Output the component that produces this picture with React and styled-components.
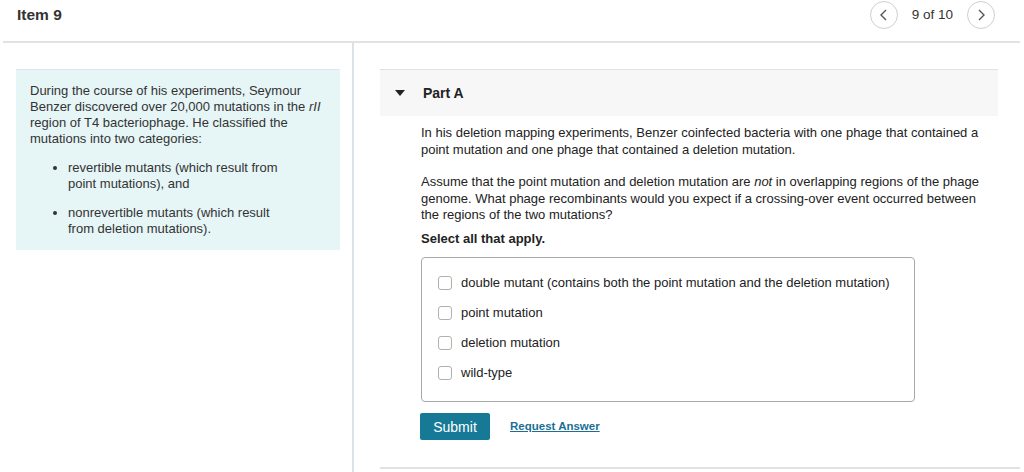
import React from 'react';
import styled, { createGlobalStyle } from 'styled-components';

const Global = createGlobalStyle`
  body {
    margin: 0;
    background: #fff;
    font-family: "Liberation Sans", Arial, Helvetica, sans-serif;
    color: #222;
  }
`;

const Page = styled.div`
  width: 1024px;
  height: 472px;
  overflow: hidden;
  display: flex;
  flex-direction: column;
`;

const TopBar = styled.header`
  height: 43px;
  margin: 0 4px 0 3px;
  padding: 0 25px 12px 14px;
  border-bottom: 2px solid #e2e2e2;
  display: flex;
  align-items: center;
  justify-content: space-between;
  box-sizing: border-box;
`;

const Title = styled.h1`
  margin: 0;
  font-size: 15.5px;
  font-weight: bold;
  color: #333;
`;

const Nav = styled.div`
  display: flex;
  align-items: center;
  gap: 14px;
  font-size: 13.5px;
  color: #333;
`;

const Circle = styled.button`
  width: 28px;
  height: 28px;
  border-radius: 50%;
  border: 1px solid #cfcfcf;
  background: #fff;
  padding: 0;
  display: flex;
  align-items: center;
  justify-content: center;
  color: #666;
`;

const Body = styled.div`
  flex: 1;
  display: grid;
  grid-template-columns: 352px 1fr;
`;

const LeftCol = styled.div`
  padding: 26px 12px 0 16px;
`;

const Intro = styled.div`
  background: #e6f5f6;
  border-top: 1px solid #dde6ea;
  height: 181px;
  box-sizing: border-box;
  padding: 13px 18px 0 14px;
  font-size: 13px;
  line-height: 16px;
  color: #333;
`;

const IntroText = styled.p`
  margin: 0;
`;

const List = styled.ul`
  margin: 13px 0 0 0;
  padding-left: 38px;
  padding-right: 40px;
  list-style: disc;
  li {
    margin-bottom: 13px;
  }
`;

const RightCol = styled.div`
  border-left: 2px solid #dbe2ea;
  padding: 26px 0 0 26px;
  display: flex;
  flex-direction: column;
`;

const PartHeader = styled.div`
  margin-right: 26px;
  height: 46px;
  background: #f7f7f7;
  border-top: 1px solid #e0e0e0;
  display: flex;
  align-items: center;
  padding-left: 15px;
  gap: 18px;
  font-size: 14px;
  font-weight: bold;
  color: #222;
`;

const Triangle = styled.span`
  width: 0;
  height: 0;
  border-left: 5px solid transparent;
  border-right: 5px solid transparent;
  border-top: 6px solid #222;
`;

const Content = styled.div`
  padding: 9px 40px 0 41px;
  font-size: 13px;
  line-height: 16.5px;
  color: #222;
  flex: 1;
`;

const Para = styled.p`
  margin: 0 0 16px 0;
`;

const Instruction = styled.p`
  margin: -9px 0 10px 0;
  font-weight: bold;
`;

const Options = styled.div`
  width: 494px;
  box-sizing: border-box;
  border: 1px solid #a8a8a8;
  border-radius: 4px;
  padding: 16px 0 19px 16px;
  display: flex;
  flex-direction: column;
  gap: 12px;
`;

const Option = styled.label`
  display: flex;
  align-items: center;
  gap: 9px;
  height: 18px;
  font-size: 13px;
  color: #222;
`;

const Box = styled.span`
  width: 12px;
  height: 12px;
  border: 1px solid #b0b0b0;
  border-radius: 3px;
  background: #fff;
`;

const Actions = styled.div`
  display: flex;
  align-items: center;
  gap: 20px;
  margin-top: 11px;
  margin-left: -1px;
`;

const Submit = styled.button`
  width: 70px;
  height: 27px;
  background: #167a96;
  color: #fff;
  border: none;
  border-radius: 2px;
  font-family: inherit;
  font-size: 14px;
`;

const Link = styled.a`
  color: #1b6f95;
  font-weight: bold;
  font-size: 11.5px;
  text-decoration: underline;
`;

const BottomRule = styled.div`
  border-top: 2px solid #e2e2e2;
  margin-right: 4px;
  height: 3px;
`;

const Chevron = ({ dir }) => (
  <svg width="10" height="12" viewBox="0 0 10 12" fill="none" stroke="#555" strokeWidth="1.4">
    {dir === 'left' ? <path d="M7 1 L2 6 L7 11" /> : <path d="M3 1 L8 6 L3 11" />}
  </svg>
);

const options = [
  'double mutant (contains both the point mutation and the deletion mutation)',
  'point mutation',
  'deletion mutation',
  'wild-type',
];

export default function App() {
  return (
    <Page>
      <Global />
      <TopBar>
        <Title>Item 9</Title>
        <Nav>
          <Circle><Chevron dir="left" /></Circle>
          <span>9 of 10</span>
          <Circle><Chevron dir="right" /></Circle>
        </Nav>
      </TopBar>
      <Body>
        <LeftCol>
          <Intro>
            <IntroText>
              During the course of his experiments, Seymour Benzer discovered over 20,000 mutations in the <i>rII</i> region of T4 bacteriophage. He classified the mutations into two categories:
            </IntroText>
            <List>
              <li>revertible mutants (which result from point mutations), and</li>
              <li>nonrevertible mutants (which result from deletion mutations).</li>
            </List>
          </Intro>
        </LeftCol>
        <RightCol>
          <PartHeader>
            <Triangle />
            <span>Part A</span>
          </PartHeader>
          <Content>
            <Para>
              In his deletion mapping experiments, Benzer coinfected bacteria with one phage that contained a point mutation and one phage that contained a deletion mutation.
            </Para>
            <Para>
              Assume that the point mutation and deletion mutation are <i>not</i> in overlapping regions of the phage genome. What phage recombinants would you expect if a crossing-over event occurred between the regions of the two mutations?
            </Para>
            <Instruction>Select all that apply.</Instruction>
            <Options>
              {options.map((o) => (
                <Option key={o}>
                  <Box />
                  {o}
                </Option>
              ))}
            </Options>
            <Actions>
              <Submit>Submit</Submit>
              <Link href="#">Request Answer</Link>
            </Actions>
          </Content>
          <BottomRule />
        </RightCol>
      </Body>
    </Page>
  );
}
